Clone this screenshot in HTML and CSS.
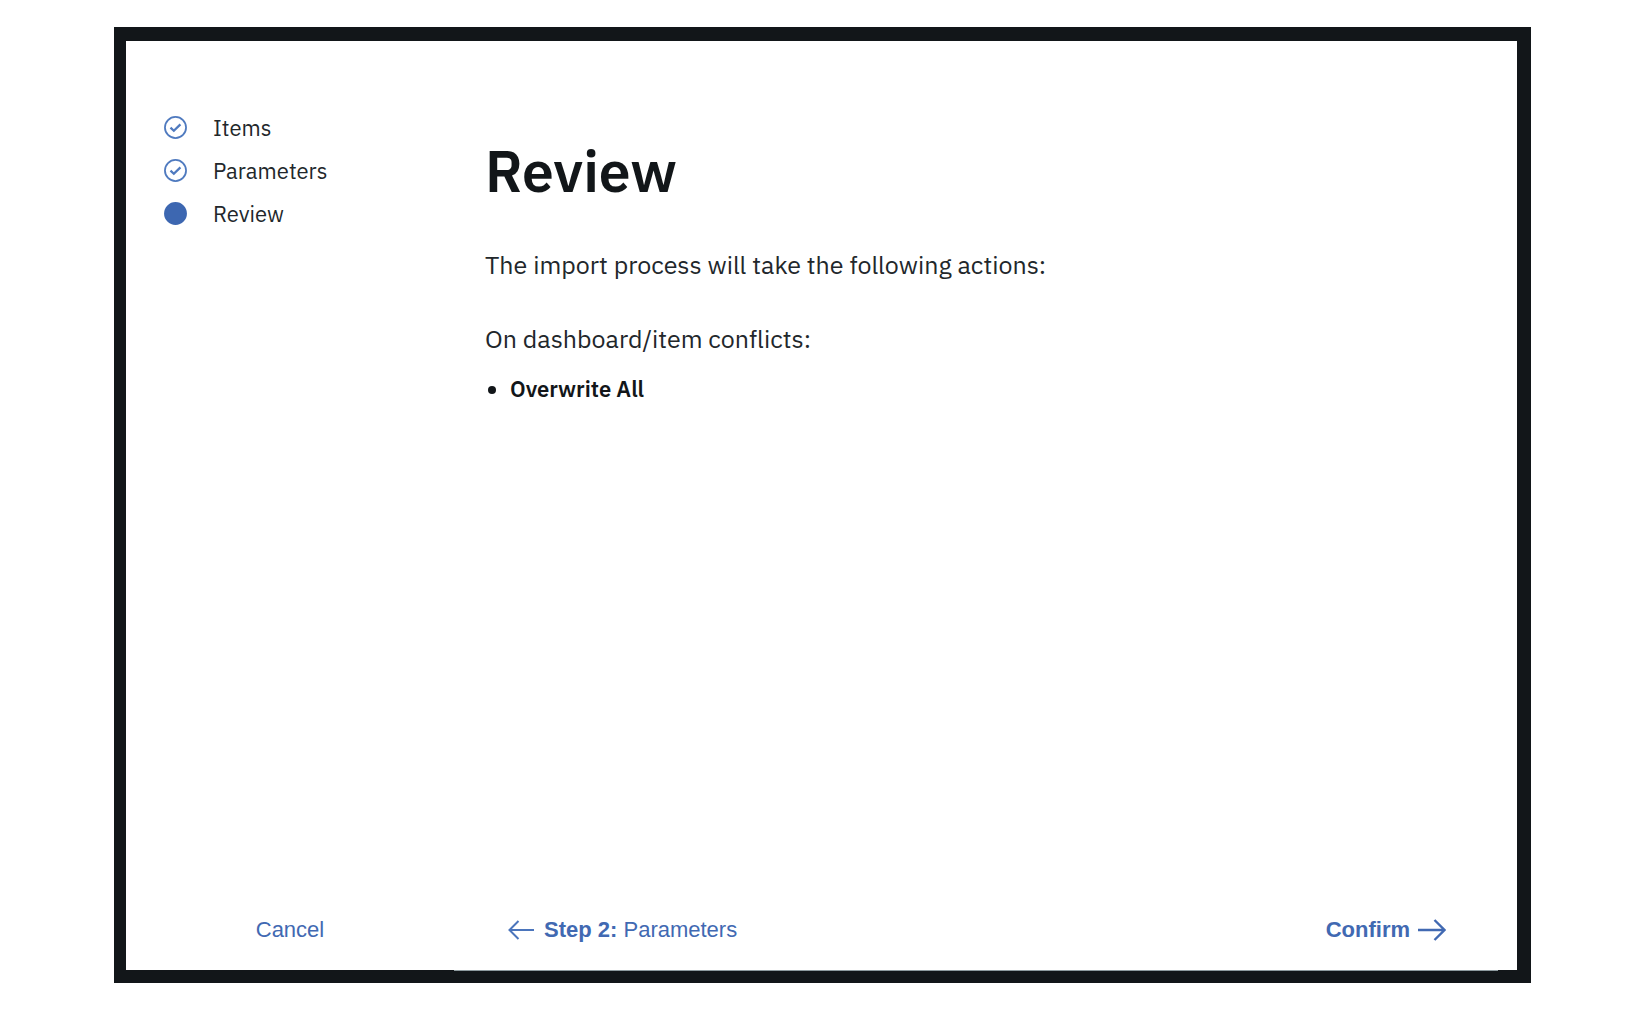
FILE: index.html
```html
<!DOCTYPE html>
<html lang="en">
<head>
  <meta charset="UTF-8">
  <meta name="viewport" content="width=device-width, initial-scale=1.0">
  <title>Import - Review</title>
  <link rel="stylesheet" href="styles.css">
</head>
<body>

  <div class="wizard">
    <div class="wizard-body">
      <ol class="steps">
        <li class="step">
          <svg class="step-icon" viewBox="0 0 22 22" aria-hidden="true">
            <circle cx="11" cy="11" r="10.1"></circle>
            <path d="M6.2 11.2l3.2 2.9 6.3-6.1"></path>
          </svg>
          <span>Items</span>
        </li>
        <li class="step">
          <svg class="step-icon" viewBox="0 0 22 22" aria-hidden="true">
            <circle cx="11" cy="11" r="10.1"></circle>
            <path d="M6.2 11.2l3.2 2.9 6.3-6.1"></path>
          </svg>
          <span>Parameters</span>
        </li>
        <li class="step" aria-current="step">
          <svg class="step-icon current" viewBox="0 0 22 22" aria-hidden="true">
            <circle cx="11" cy="11" r="10.1"></circle>
          </svg>
          <span>Review</span>
        </li>
      </ol>

      <main class="content">
        <h1>Review</h1>
        <p>The import process will take the following actions:</p>
        <p>On dashboard/item conflicts:</p>
        <ul class="actions">
          <li>Overwrite All</li>
        </ul>
      </main>
    </div>

    <footer class="wizard-footer">
      <button type="button" class="cancel-btn">Cancel</button>
      <button type="button" class="back-btn">
        <svg class="arrow" viewBox="0 0 26 20" aria-hidden="true">
          <path d="M26 10H1.5M10.5 1L1.5 10l9 9"></path>
        </svg>
        <span><strong>Step 2:</strong> Parameters</span>
      </button>
      <button type="button" class="confirm-btn">
        <strong>Confirm</strong>
        <svg class="arrow arrow-next" viewBox="0 0 28 22" aria-hidden="true">
          <path d="M0 11h26.5M16.5 1l10 10-10 10"></path>
        </svg>
      </button>
    </footer>
  </div>

</body>
</html>
```
FILE: styles.css
```css
* {
  box-sizing: border-box;
}

body {
  margin: 0;
  padding: 27px 114px;
  min-height: 100vh;
  display: flex;
  background-color: #fff;
  color: #22272b;
  font-family: "IBM Plex Sans", Roboto, sans-serif;
}

.wizard {
  position: relative;
  flex: 1;
  display: flex;
  flex-direction: column;
  background-color: #fff;
  border: 14px solid #121619;
  border-left-width: 12px;
  border-bottom-width: 13px;
}

/* thin divider along the bottom edge of the panel */
.wizard::after {
  content: "";
  position: absolute;
  left: 328px;
  right: 19px;
  bottom: -1px;
  height: 1px;
  background-color: #8d9a9e;
}

.wizard-body {
  flex: 1;
  display: grid;
  grid-template-columns: 320px 1fr;
  padding: 65px 39px 0 38px;
}

.steps {
  list-style: none;
  margin: 0;
  padding: 0;
}

.step {
  display: flex;
  align-items: center;
  gap: 26px;
  height: 43px;
  font-size: 22px;
  line-height: 28px;
}

.step-icon {
  width: 23px;
  height: 23px;
  fill: none;
  stroke: #4f7abf;
  stroke-width: 1.7;
}

.step-icon path {
  stroke-width: 2.2;
}

.step-icon.current {
  fill: #3d67b1;
  stroke: #3d67b1;
}

.content {
  padding: 30px 0 0 1px;
}

h1 {
  margin: 0 0 43px;
  color: #121619;
  font-size: 57px;
  font-weight: 600;
  line-height: 70px;
}

p {
  margin: 0 0 42px;
  font-size: 25px;
  line-height: 32px;
}

.actions {
  margin: -24px 0 0;
  padding-left: 25px;
  color: #121619;
  font-size: 22px;
  font-weight: 600;
  line-height: 32px;
}

.wizard-footer {
  display: grid;
  grid-template-columns: 328px 1fr auto;
  align-items: center;
  padding: 0 71px 20px 0;
}

button {
  display: flex;
  align-items: center;
  gap: 10px;
  padding: 0;
  border: none;
  background: none;
  color: #4169b2;
  font-family: "Liberation Sans", Arial, sans-serif;
  font-size: 22px;
  line-height: 40px;
  cursor: pointer;
}

.cancel-btn {
  justify-content: center;
}

.back-btn {
  justify-self: start;
  padding-left: 54px;
}

.confirm-btn {
  gap: 8px;
}

.arrow {
  width: 26px;
  height: 20px;
  fill: none;
  stroke: #4b75bc;
  stroke-width: 2;
}

.arrow-next {
  width: 28px;
  height: 22px;
  stroke: #4169b2;
  stroke-width: 2.4;
}
```
